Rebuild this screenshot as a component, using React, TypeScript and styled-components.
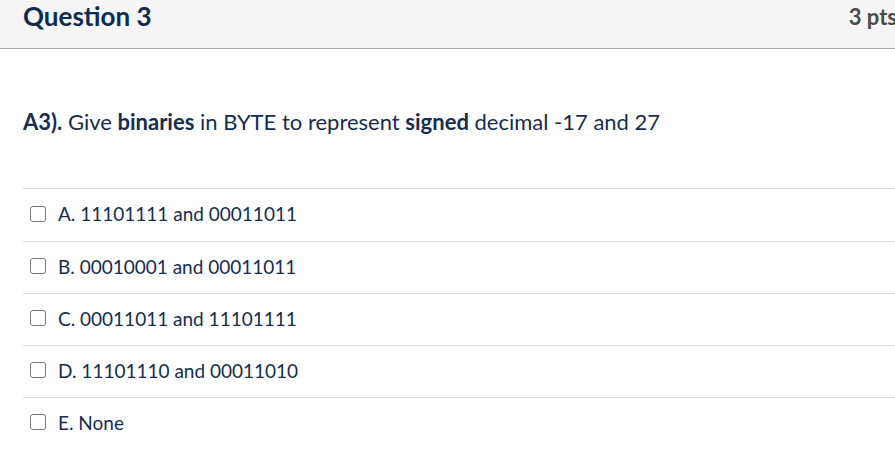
import styled, { createGlobalStyle } from 'styled-components';

const GlobalStyle = createGlobalStyle`
  body {
    margin: 0;
    background: #fff;
    font-family: Lato, "Open Sans", sans-serif;
    color: #142d50;
    overflow: hidden;
  }
`

const Header = styled.div`
  display: flex;
  justify-content: space-between;
  align-items: center;
  height: 48px;
  padding-left: 23px;
  background-color: #f5f5f5;
  border-bottom: 1px solid #a9a9a9;
  box-sizing: content-box;

  h2 {
    margin: 0;
    font-size: 26px;
    font-weight: bold;
    color: #102b4e;
    line-height: 1;
    padding-bottom: 16px;
  }

  .points {
    font-size: 22px;
    font-weight: bold;
    color: #4a4a4a;
    margin-right: -2px;
    padding-bottom: 16px;
  }
`

const Body = styled.div`
  padding: 0 0 0 23px;
`

const QuestionText = styled.p`
  margin: 58px 0 51px;
  font-size: 22px;
  line-height: 30px;

  b {
    font-weight: bold;
  }
`

const AnswerRow = styled.label`
  display: flex;
  align-items: center;
  gap: 12px;
  height: 48px;
  padding: 0 0 3px 7px;
  border-top: 1px solid #dcdcdc;
  font-size: 19px;
  box-sizing: content-box;

  &:first-of-type {
    height: 49px;
  }
`

const Box = styled.span`
  width: 14px;
  height: 14px;
  border: 1.5px solid #777;
  border-radius: 3px;
  flex-shrink: 0;
`

const answers = [
    'A. 11101111 and 00011011',
    'B. 00010001 and 00011011',
    'C. 00011011 and 11101111',
    'D. 11101110 and 00011010',
    'E. None',
]

function App() {
    return (
        <>
            <GlobalStyle />
            <Header>
                <h2>Question 3</h2>
                <span className={'points'}>3 pts</span>
            </Header>
            <Body>
                <QuestionText>
                    <b>A3).</b> Give <b>binaries</b> in BYTE to represent <b>signed</b> decimal -17 and 27
                </QuestionText>
                {answers.map(a =>
                    <AnswerRow key={a}>
                        <Box />
                        <span>{a}</span>
                    </AnswerRow>
                )}
            </Body>
        </>
    );
}

export default App;
